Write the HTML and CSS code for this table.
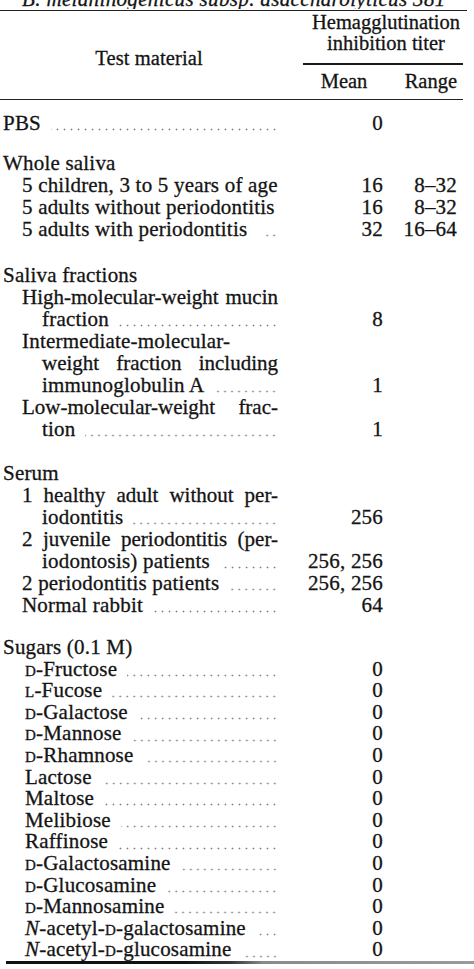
FILE: index.html
```html
<!DOCTYPE html>
<html lang="en">
<head>
<meta charset="utf-8">
<title>Hemagglutination inhibition titer</title>
<link rel="stylesheet" href="styles.css">
</head>
<body>
<div class="page">
  <div class="title"><p class="title-text">B. melaninogenicus subsp. asaccharolyticus 381</p></div>
  <div class="toprule"></div>
  <div class="head">
    <div class="head-label">Test material</div>
    <div class="hg">
      <div class="hg-title">Hemagglutination<br>inhibition titer</div>
      <div class="hg-rule"></div>
      <div class="hg-sub"><span class="sub-mean">Mean</span><span class="sub-range">Range</span></div>
    </div>
  </div>

  <div class="tbody">
    <section class="sec sec1">
      <div class="row"><div class="lab"><span>PBS</span><span class="lead"></span></div><div class="mean">0</div><div class="range"></div></div>
    </section>

    <section class="sec sec2">
      <div class="row"><div class="lab"><span>Whole saliva</span></div><div class="mean"></div><div class="range"></div></div>
      <div class="row"><div class="lab ind1"><span>5 children, 3 to 5 years of age</span></div><div class="mean">16</div><div class="range">8–32</div></div>
      <div class="row"><div class="lab ind1"><span>5 adults without periodontitis</span></div><div class="mean">16</div><div class="range">8–32</div></div>
      <div class="row"><div class="lab ind1"><span>5 adults with periodontitis</span><span class="lead short"></span></div><div class="mean">32</div><div class="range">16–64</div></div>
    </section>

    <section class="sec sec3">
      <div class="row"><div class="lab"><span>Saliva fractions</span></div><div class="mean"></div><div class="range"></div></div>
      <div class="row"><div class="lab ind1 just">High-molecular-weight mucin</div><div class="mean"></div><div class="range"></div></div>
      <div class="row"><div class="lab ind2"><span>fraction</span><span class="lead"></span></div><div class="mean">8</div><div class="range"></div></div>
      <div class="row"><div class="lab ind1"><span>Intermediate-molecular-</span></div><div class="mean"></div><div class="range"></div></div>
      <div class="row"><div class="lab ind2 just">weight fraction including</div><div class="mean"></div><div class="range"></div></div>
      <div class="row"><div class="lab ind2"><span>immunoglobulin A</span><span class="lead"></span></div><div class="mean">1</div><div class="range"></div></div>
      <div class="row"><div class="lab ind1 just">Low-molecular-weight frac-</div><div class="mean"></div><div class="range"></div></div>
      <div class="row"><div class="lab ind2"><span>tion</span><span class="lead"></span></div><div class="mean">1</div><div class="range"></div></div>
    </section>

    <section class="sec sec4">
      <div class="row"><div class="lab"><span>Serum</span></div><div class="mean"></div><div class="range"></div></div>
      <div class="row"><div class="lab ind1 just">1 healthy adult without per-</div><div class="mean"></div><div class="range"></div></div>
      <div class="row"><div class="lab ind2"><span>iodontitis</span><span class="lead"></span></div><div class="mean">256</div><div class="range"></div></div>
      <div class="row"><div class="lab ind1 just">2 juvenile periodontitis (per-</div><div class="mean"></div><div class="range"></div></div>
      <div class="row"><div class="lab ind2"><span>iodontosis) patients</span><span class="lead"></span></div><div class="mean">256, 256</div><div class="range"></div></div>
      <div class="row"><div class="lab ind1"><span>2 periodontitis patients</span><span class="lead"></span></div><div class="mean">256, 256</div><div class="range"></div></div>
      <div class="row"><div class="lab ind1"><span>Normal rabbit</span><span class="lead"></span></div><div class="mean">64</div><div class="range"></div></div>
    </section>

    <section class="sec sec5">
      <div class="row srow"><div class="lab"><span>Sugars (0.1 M)</span></div><div class="mean"></div><div class="range"></div></div>
      <div class="row srow"><div class="lab ind3"><span><span class="sc">d</span>-Fructose</span><span class="lead"></span></div><div class="mean">0</div><div class="range"></div></div>
      <div class="row srow"><div class="lab ind3"><span><span class="sc">l</span>-Fucose</span><span class="lead"></span></div><div class="mean">0</div><div class="range"></div></div>
      <div class="row srow"><div class="lab ind3"><span><span class="sc">d</span>-Galactose</span><span class="lead"></span></div><div class="mean">0</div><div class="range"></div></div>
      <div class="row srow"><div class="lab ind3"><span><span class="sc">d</span>-Mannose</span><span class="lead"></span></div><div class="mean">0</div><div class="range"></div></div>
      <div class="row srow"><div class="lab ind3"><span><span class="sc">d</span>-Rhamnose</span><span class="lead"></span></div><div class="mean">0</div><div class="range"></div></div>
      <div class="row srow"><div class="lab ind3"><span>Lactose</span><span class="lead"></span></div><div class="mean">0</div><div class="range"></div></div>
      <div class="row srow"><div class="lab ind3"><span>Maltose</span><span class="lead"></span></div><div class="mean">0</div><div class="range"></div></div>
      <div class="row srow"><div class="lab ind3"><span>Melibiose</span><span class="lead"></span></div><div class="mean">0</div><div class="range"></div></div>
      <div class="row srow"><div class="lab ind3"><span>Raffinose</span><span class="lead"></span></div><div class="mean">0</div><div class="range"></div></div>
      <div class="row srow"><div class="lab ind3"><span><span class="sc">d</span>-Galactosamine</span><span class="lead"></span></div><div class="mean">0</div><div class="range"></div></div>
      <div class="row srow"><div class="lab ind3"><span><span class="sc">d</span>-Glucosamine</span><span class="lead"></span></div><div class="mean">0</div><div class="range"></div></div>
      <div class="row srow"><div class="lab ind3"><span><span class="sc">d</span>-Mannosamine</span><span class="lead"></span></div><div class="mean">0</div><div class="range"></div></div>
      <div class="row srow"><div class="lab ind3"><span><i>N</i>-acetyl-<span class="sc">d</span>-galactosamine</span><span class="lead"></span></div><div class="mean">0</div><div class="range"></div></div>
      <div class="row srow"><div class="lab ind3"><span><i>N</i>-acetyl-<span class="sc">d</span>-glucosamine</span><span class="lead"></span></div><div class="mean">0</div><div class="range"></div></div>
    </section>
  </div>
  <div class="bottomrule"></div>
</div>
</body>
</html>
```

FILE: styles.css
```css
html, body {
  margin: 0;
  padding: 0;
  background: #ffffff;
}

body {
  font-family: "Liberation Serif", "Times New Roman", serif;
  color: #141414;
  -webkit-text-stroke: 0.3px #141414;
}

.page {
  width: 474px;
  overflow: hidden;
}

/* clipped caption line at the very top */
.title {
  height: 9px;
  overflow: hidden;
}

.title-text {
  margin: -11px 0 0 22px;
  font-size: 21px;
  line-height: 21px;
  font-style: italic;
  letter-spacing: 0.35px;
  white-space: nowrap;
}

.toprule {
  width: 467px;
  height: 1px;
  margin-top: 1px;
  background: #222;
}

/* header */
.head {
  display: flex;
  width: 463px;
  border-bottom: 1px solid #222;
  font-size: 20.5px;
  line-height: 21px;
}

.head-label {
  width: 298px;
  text-align: center;
  padding-top: 37px;
  letter-spacing: 0.1px;
}

.hg {
  width: 160px;
  margin-left: 5px;
  padding-top: 1px;
  padding-bottom: 7.5px;
}

.hg-title {
  text-align: center;
  padding-left: 6px;
}

.hg-rule {
  margin-top: 9px;
  height: 1.5px;
  background: #1a1a1a;
}

.hg-sub {
  margin-top: 6px;
  display: grid;
  grid-template-columns: 82px 1fr;
}

.sub-mean {
  text-align: center;
}

.sub-range {
  text-align: right;
  padding-right: 6px;
}

/* body */
.tbody {
  padding-top: 12px;
  font-size: 21px;
}

.sec2 { margin-top: 18px; }
.sec3 { margin-top: 24px; }
.sec4 { margin-top: 22px; }
.sec5 { margin-top: 21px; }

.row {
  display: grid;
  grid-template-columns: 280px 103px 74px;
  height: 22px;
  line-height: 22px;
  letter-spacing: 0.2px;
}

.row.srow {
  height: 21.6px;
  line-height: 21.6px;
}

.lab {
  display: flex;
  white-space: nowrap;
  padding-left: 3px;
  padding-right: 2px;
}

.lab.ind1 { padding-left: 22px; }
.lab.ind2 { padding-left: 42px; }
.lab.ind3 { padding-left: 25px; }

.lab.just {
  display: block;
  text-align: justify;
  text-align-last: justify;
  letter-spacing: 0;
}

.lead {
  flex: 1;
  margin-left: 10px;
  background-image: radial-gradient(circle at center, #7a7a7a 0, #7a7a7a 0.6px, rgba(255,255,255,0) 1.2px);
  background-size: 7px 3px;
  background-repeat: repeat-x;
  background-position: right 0 top 15.5px;
}

.lead.short {
  margin-left: 18px;
}

.srow .lead {
  background-position: right 0 top 15.3px;
}

.sc {
  font-variant: small-caps;
}

.mean,
.range {
  text-align: right;
  white-space: nowrap;
}

.bottomrule {
  margin-left: 6px;
  height: 3px;
  background: linear-gradient(to right, #111 0%, #111 38%, #333 48%, #8a8a8a 55%, #9a9a9a 100%);
}
```
